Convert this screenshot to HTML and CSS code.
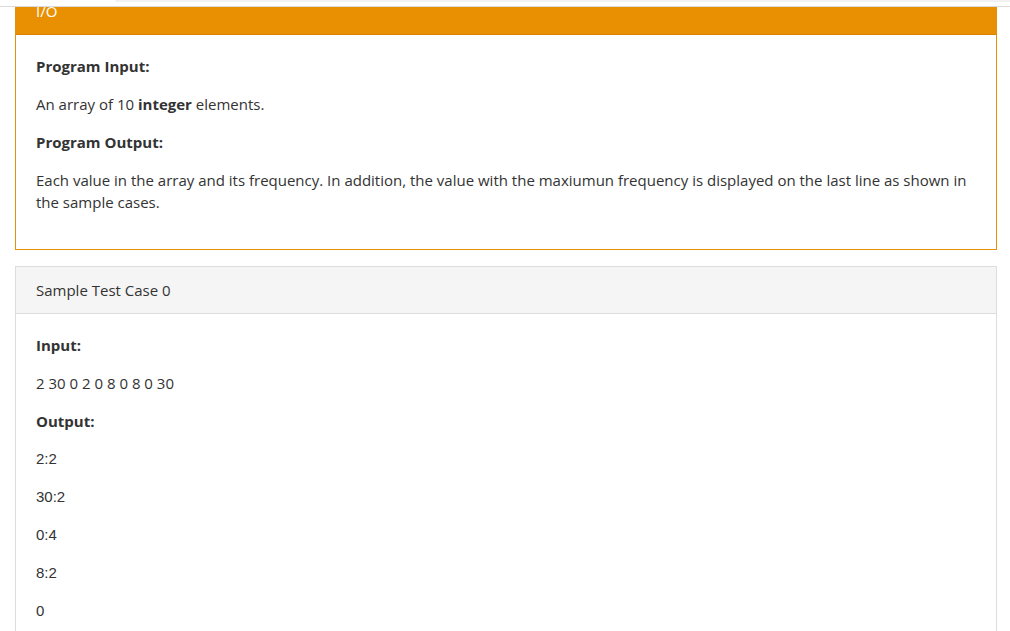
FILE: index.html
```html
<!DOCTYPE html>
<html>
<head>
<meta charset="utf-8">
<link rel="stylesheet" href="styles.css">
</head>
<body>
<div class="topbar"><div class="topbar-strip"></div></div>
<div class="page">
  <div class="panel panel-io">
    <div class="panel-heading io-heading">I/O</div>
    <div class="panel-body">
      <p class="label">Program Input:</p>
      <p>An array of 10 <strong>integer</strong> elements.</p>
      <p class="label">Program Output:</p>
      <p>Each value in the array and its frequency. In addition, the value with the maxiumun frequency is displayed on the last line as shown in the sample cases.</p>
    </div>
  </div>
  <div class="panel panel-sample">
    <div class="panel-heading sample-heading">Sample Test Case 0</div>
    <div class="panel-body">
      <p class="label">Input:</p>
      <p>2 30 0 2 0 8 0 8 0 30</p>
      <p class="label">Output:</p>
      <p class="out">2:2</p>
      <p class="out">30:2</p>
      <p class="out">0:4</p>
      <p class="out">8:2</p>
      <p class="out">0</p>
    </div>
  </div>
</div>
</body>
</html>
```
FILE: styles.css
```css
html, body {
  margin: 0;
  padding: 0;
  background: #fff;
}
body {
  font-family: "Open Sans", "Liberation Sans", sans-serif;
  font-size: 15px;
  line-height: 22px;
  color: #333;
  overflow: hidden;
}
.topbar {
  position: fixed;
  top: 0;
  left: 0;
  right: 0;
  height: 6px;
  background: #fff;
  border-bottom: 1px solid #dadada;
  z-index: 10;
}
.topbar-strip {
  margin-left: 115px;
  height: 2px;
  background: #f1f1f1;
  border-bottom-left-radius: 3px;
}
.page {
  padding: 0 13px 0 15px;
  margin-top: -13px;
}
.panel {
  border: 1px solid #ddd;
  margin-bottom: 16px;
  background: #fff;
}
.panel-io {
  border-color: #e69008;
}
.panel-heading {
  padding: 12px 20px;
  line-height: 22px;
}
.io-heading {
  background: #e99002;
  color: #fff;
  border-bottom: 1px solid #d98200;
}
.sample-heading {
  background: #f5f5f5;
  color: #333;
  border-bottom: 1px solid #ddd;
}
.panel-body {
  padding: 20px 20px 20px;
}
.panel-body p {
  margin: 0 0 16px;
}
.panel-body .label {
  font-weight: bold;
}
.panel-body .out {
  font-family: "Liberation Sans", Arial, sans-serif;
}
```
